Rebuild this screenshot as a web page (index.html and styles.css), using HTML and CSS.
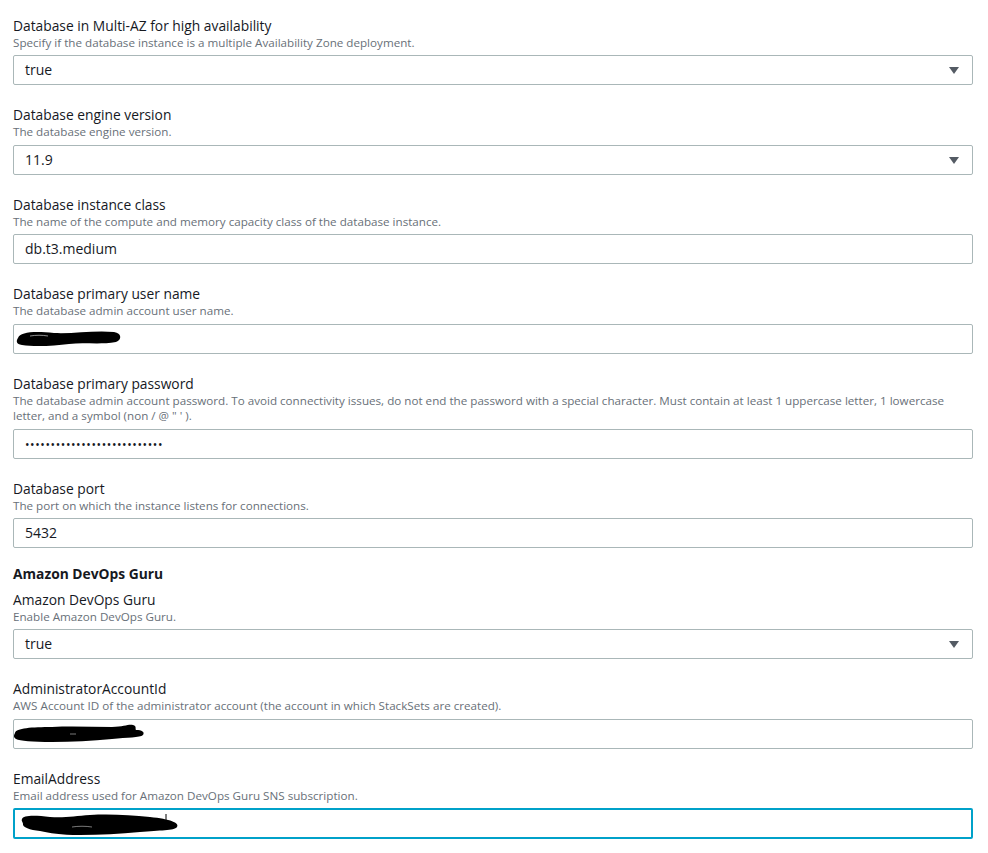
FILE: index.html
```html
<!DOCTYPE html>
<html>
<head>
<meta charset="utf-8">
<link rel="stylesheet" href="styles.css">
</head>
<body>
<div class="form">
  <div class="field">
    <div class="label">Database in Multi-AZ for high availability</div>
    <div class="desc">Specify if the database instance is a multiple Availability Zone deployment.</div>
    <div class="input select">true<span class="caret"></span></div>
  </div>
  <div class="field">
    <div class="label">Database engine version</div>
    <div class="desc">The database engine version.</div>
    <div class="input select">11.9<span class="caret"></span></div>
  </div>
  <div class="field">
    <div class="label">Database instance class</div>
    <div class="desc">The name of the compute and memory capacity class of the database instance.</div>
    <div class="input">db.t3.medium</div>
  </div>
  <div class="field">
    <div class="label">Database primary user name</div>
    <div class="desc">The database admin account user name.</div>
    <div class="input">
      <svg class="blot blot-user" width="110" height="20" viewBox="0 0 110 20"><path d="M4 10 C6 4 20 3 40 5 C60 6 80 2 100 4 C108 5 108 12 102 14 C85 17 70 14 55 16 C40 18 20 19 8 17 C2 16 2 13 4 10 Z" fill="#000"/><path d="M16 8 C22 7 28 7 34 8" stroke="#fff" stroke-width="0.8" fill="none" opacity="0.7"/></svg>
    </div>
  </div>
  <div class="field">
    <div class="label">Database primary password</div>
    <div class="desc">The database admin account password. To avoid connectivity issues, do not end the password with a special character. Must contain at least 1 uppercase letter, 1 lowercase letter, and a symbol (non / @ " ' ).</div>
    <div class="input"><span class="dots">•••••••••••••••••••••••••••</span></div>
  </div>
  <div class="field">
    <div class="label">Database port</div>
    <div class="desc">The port on which the instance listens for connections.</div>
    <div class="input">5432</div>
  </div>
  <div class="section">Amazon DevOps Guru</div>
  <div class="field">
    <div class="label">Amazon DevOps Guru</div>
    <div class="desc">Enable Amazon DevOps Guru.</div>
    <div class="input select">true<span class="caret"></span></div>
  </div>
  <div class="field">
    <div class="label">AdministratorAccountId</div>
    <div class="desc">AWS Account ID of the administrator account (the account in which StackSets are created).</div>
    <div class="input">
      <svg class="blot blot-admin" width="134" height="24" viewBox="0 0 134 24"><path d="M3 12 C4 7 20 6 40 6 C60 5 80 6 100 6 C112 6 116 3 121 4 C125 5 123 8 124 9 C130 9 133 11 131 14 C128 17 115 16 100 18 C80 20 60 21 40 21 C20 21 8 20 4 18 C1 16 2 14 3 12 Z" fill="#000"/><path d="M58 13 L64 13" stroke="#fff" stroke-width="0.8" opacity="0.6"/></svg>
    </div>
  </div>
  <div class="field last">
    <div class="label">EmailAddress</div>
    <div class="desc">Email address used for Amazon DevOps Guru SNS subscription.</div>
    <div class="input focused">
      <svg class="blot blot-email" width="160" height="26" viewBox="0 0 160 26"><path d="M2 8 C3 4 15 4 30 6 C45 7 55 5 70 4 C90 3 110 4 130 6 C150 8 160 12 157 16 C154 20 140 19 120 21 C100 23 80 24 60 24 C40 24 30 22 20 20 C10 19 2 16 3 13 C3 11 1 10 2 8 Z" fill="#000"/><path d="M52 16 C58 15 66 15 72 16" stroke="#fff" stroke-width="0.8" fill="none" opacity="0.6"/><path d="M146 3 L146 14" stroke="#000" stroke-width="1"/></svg>
    </div>
  </div>
</div>
</body>
</html>
```
FILE: styles.css
```css
html, body {
  margin: 0;
  padding: 0;
  background: #ffffff;
}
body {
  font-family: "Open Sans", "Noto Sans", sans-serif;
  color: #16191f;
  padding: 14.5px 15px 0 13px;
}
.form {
  display: flex;
  flex-direction: column;
}
.field {
  display: flex;
  flex-direction: column;
  margin-bottom: 19px;
}
.field.last {
  margin-bottom: 0;
}
.label {
  font-size: 13.8px;
  line-height: 19px;
  padding-top: 1px;
  color: #16191f;
}
.desc {
  font-size: 11.65px;
  line-height: 15.5px;
  color: #687078;
  margin-bottom: 5px;
}
.section {
  font-size: 13.8px;
  font-weight: 700;
  line-height: 20px;
  margin-top: -3.5px;
  margin-bottom: 5px;
}
.input {
  position: relative;
  height: 30px;
  box-sizing: border-box;
  border: 1px solid #aab7b8;
  border-radius: 2px;
  padding: 0 11px;
  font-size: 14px;
  line-height: 28px;
  color: #16191f;
  background: #fff;
}
.input.focused {
  border: 2px solid #00a1c9;
  height: 31px;
}
.caret {
  position: absolute;
  right: 13px;
  top: 11px;
  width: 0;
  height: 0;
  border-left: 5px solid transparent;
  border-right: 5px solid transparent;
  border-top: 7px solid #545b64;
}
.dots {
  font-size: 12px;
  letter-spacing: 0.6px;
  color: #16191f;
}
.blot {
  position: absolute;
  display: block;
}
.blot-user {
  left: 0;
  top: 3px;
}
.blot-admin {
  left: -2px;
  top: 1px;
}
.blot-email {
  left: 5px;
  top: 1px;
}
```
